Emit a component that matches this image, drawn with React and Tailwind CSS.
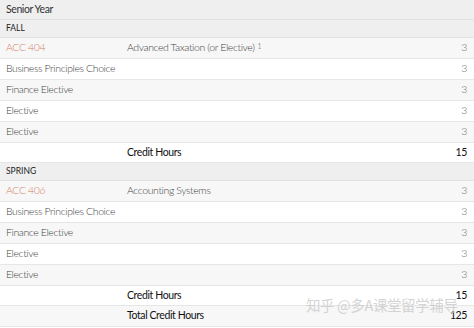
import React from "react";

const rows = [
  { type: "head", label: "Senior Year" },
  { type: "term", label: "FALL" },
  { type: "course", code: "ACC 404", title: "Advanced Taxation (or Elective)", sup: "1", hrs: "3", bg: "bg-[#f7f7f7]" },
  { type: "course", name: "Business Principles Choice", hrs: "3", bg: "bg-white" },
  { type: "course", name: "Finance Elective", hrs: "3", bg: "bg-[#f7f7f7]" },
  { type: "course", name: "Elective", hrs: "3", bg: "bg-white" },
  { type: "course", name: "Elective", hrs: "3", bg: "bg-[#f7f7f7]" },
  { type: "total", title: "Credit Hours", hrs: "15", bg: "bg-white" },
  { type: "term", label: "SPRING" },
  { type: "course", code: "ACC 406", title: "Accounting Systems", hrs: "3", bg: "bg-[#f7f7f7]" },
  { type: "course", name: "Business Principles Choice", hrs: "3", bg: "bg-white" },
  { type: "course", name: "Finance Elective", hrs: "3", bg: "bg-[#f7f7f7]" },
  { type: "course", name: "Elective", hrs: "3", bg: "bg-white" },
  { type: "course", name: "Elective", hrs: "3", bg: "bg-[#f7f7f7]" },
  { type: "total", title: "Credit Hours", hrs: "15", bg: "bg-white" },
  { type: "total", title: "Total Credit Hours", hrs: "125", bg: "bg-[#f7f7f7]" },
];

export default function App() {
  return (
    <div
      className="relative w-[474px] h-[328px] overflow-hidden bg-white text-[10.5px] tracking-[-0.4px]"
      style={{ fontFamily: "Lato, 'Noto Sans CJK SC', sans-serif" }}
    >
      {rows.map((r, i) => {
        if (r.type === "head")
          return (
            <div key={i} className="h-[20px] flex items-center px-[6px] bg-[#efefef] border-b border-[#e2e2e2] text-[#333] text-[10.5px]">
              {r.label}
            </div>
          );
        if (r.type === "term")
          return (
            <div key={i} className="h-[18px] flex items-center px-[6px] bg-[#efefef] border-b border-[#e2e2e2] text-[#222] text-[8.5px] tracking-normal">
              {r.label}
            </div>
          );
        const isTotal = r.type === "total";
        return (
          <div
            key={i}
            className={`${r.bg} ${i === 7 || i === 14 ? "h-[20px]" : "h-[21px]"} flex items-center border-b border-[#e6e6e6] whitespace-nowrap`}
          >
            <div className="w-[127px] pl-[6px] shrink-0 font-light">
              {r.code ? (
                <span className="text-[#d2825f]">{r.code}</span>
              ) : (
                <span className="text-[#444]">{r.name}</span>
              )}
            </div>
            <div className={`flex-1 ${isTotal ? "text-[#111]" : "text-[#444] font-light"}`}>
              {r.title}
              {r.sup && <sup className="text-[7px] ml-[3px] relative -top-[2px]">{r.sup}</sup>}
            </div>
            <div className={`pr-[7px] text-right ${isTotal ? "text-[#111]" : "text-[#666] font-light"}`}>
              {r.hrs}
            </div>
          </div>
        );
      })}
      <div
        className="absolute left-[306px] top-[298px] whitespace-nowrap text-[14.5px] leading-none text-[#c9c9c9]/80"
        style={{ fontFamily: "'Noto Sans CJK SC', sans-serif" }}
      >
        知乎 @多A课堂留学辅导
      </div>
    </div>
  );
}
